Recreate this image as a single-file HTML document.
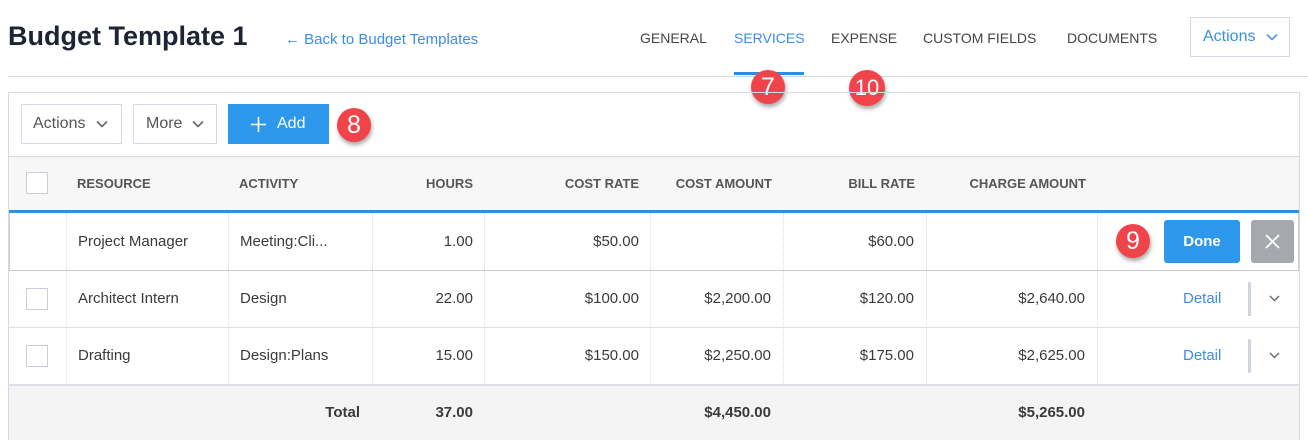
<!DOCTYPE html><html><head><style>
*{box-sizing:border-box;margin:0;padding:0}
body{width:1308px;height:444px;background:#fff;font-family:"Liberation Sans",sans-serif;position:relative;overflow:hidden;color:#333}
.a{position:absolute}
.badge{position:absolute;width:34px;height:34px;border-radius:50%;background:#f0434a;color:#fff;font-size:25px;text-align:center;line-height:34px;box-shadow:1px 3px 4px rgba(0,0,0,.35)}
.th{position:absolute;top:176px;font-size:13px;font-weight:bold;color:#555}
.c{position:absolute;font-size:15px;color:#3a3a3a;white-space:nowrap}
.r{text-align:right}
.vl{position:absolute;width:0;border-left:1px dotted #d8dce2}
.cb{position:absolute;width:22px;height:22px;border:1px solid #ccd;background:#fff}
.chev{position:absolute}
</style></head><body>
<div class="a" style="left:8px;top:21px;font-size:27px;font-weight:bold;color:#1d2433">Budget Template 1</div>
<div class="a" style="left:285px;top:31px;font-size:15px;color:#3a8ee6">← Back to Budget Templates</div>
<div class="a" style="left:640px;top:30px;font-size:14px;color:#444">GENERAL</div>
<div class="a" style="left:734px;top:30px;font-size:14px;color:#3a8ee6">SERVICES</div>
<div class="a" style="left:734px;top:72px;width:70px;height:3px;background:#2d8fe0"></div>
<div class="a" style="left:831px;top:30px;font-size:14px;color:#444">EXPENSE</div>
<div class="a" style="left:923px;top:30px;font-size:14px;color:#444">CUSTOM FIELDS</div>
<div class="a" style="left:1067px;top:30px;font-size:14px;color:#444">DOCUMENTS</div>
<div class="a" style="left:1190px;top:17px;width:100px;height:40px;border:1px solid #d4dae3;color:#3a8ee6;font-size:16px;padding:10px 0 0 12px">Actions</div>
<svg class="chev" style="left:1266px;top:33px" width="12" height="8"><path d="M1 1.5L6 6.5L11 1.5" fill="none" stroke="#3a8ee6" stroke-width="1.5"/></svg>
<div class="a" style="left:8px;top:76px;width:1300px;height:1px;background:#d4dae3"></div>
<div class="badge" style="left:751px;top:70px">7</div>
<div class="badge" style="left:849px;top:70px;width:36px;height:36px;line-height:36px;font-size:22px">10</div>
<div class="a" style="left:8px;top:92px;width:1292px;height:348px;border:1px solid #d4dae3"></div>
<div class="a" style="left:21px;top:104px;width:101px;height:40px;border:1px solid #d4dae3;font-size:16px;color:#555;padding:10px 0 0 11px;background:#fff">Actions</div>
<svg class="chev" style="left:96px;top:120px" width="12" height="8"><path d="M1 1.5L6 6.5L11 1.5" fill="none" stroke="#555" stroke-width="1.5"/></svg>
<div class="a" style="left:133px;top:104px;width:84px;height:40px;border:1px solid #d4dae3;font-size:16px;color:#555;padding:10px 0 0 12px">More</div>
<svg class="chev" style="left:192px;top:120px" width="12" height="8"><path d="M1 1.5L6 6.5L11 1.5" fill="none" stroke="#555" stroke-width="1.5"/></svg>
<div class="a" style="left:228px;top:104px;width:101px;height:40px;background:#2d97ec;color:#fff;font-size:16px;padding:11px 0 0 49px">Add</div>
<svg class="chev" style="left:250px;top:116px" width="17" height="17"><path d="M8.5 1V16M1 8.5H16" stroke="#fff" stroke-width="1.6"/></svg>
<div class="badge" style="left:337px;top:108px">8</div>
<div class="a" style="left:9px;top:156px;width:1290px;height:55px;background:#f7f7f7;border-top:1px solid #d4dae3"></div>
<div class="cb" style="left:26px;top:172px"></div>
<div class="th" style="left:77px">RESOURCE</div>
<div class="th" style="left:239px">ACTIVITY</div>
<div class="th r" style="left:372px;width:101px">HOURS</div>
<div class="th r" style="left:484px;width:155px">COST RATE</div>
<div class="th r" style="left:650px;width:122px">COST AMOUNT</div>
<div class="th r" style="left:783px;width:132px">BILL RATE</div>
<div class="th r" style="left:926px;width:160px">CHARGE AMOUNT</div>
<div class="a" style="left:9px;top:210px;width:1290px;height:3px;background:#2d8fe0"></div>
<div class="a" style="left:9px;top:213px;width:1290px;height:58px;border:1px solid #c8ccd2;border-top:none"></div>
<div class="a" style="left:9px;top:327px;width:1290px;height:1px;background:#dde1e7"></div>
<div class="a" style="left:9px;top:384px;width:1290px;height:56px;background:#f4f4f4;border-top:2px solid #dde1e7"></div>
<div class="vl" style="left:66px;top:213px;height:171px"></div>
<div class="vl" style="left:228px;top:213px;height:171px"></div>
<div class="vl" style="left:372px;top:213px;height:171px"></div>
<div class="vl" style="left:484px;top:213px;height:171px"></div>
<div class="vl" style="left:650px;top:213px;height:171px"></div>
<div class="vl" style="left:783px;top:213px;height:171px"></div>
<div class="vl" style="left:926px;top:213px;height:171px"></div>
<div class="vl" style="left:1097px;top:213px;height:171px"></div>
<div class="c" style="left:78px;top:233px">Project Manager</div>
<div class="c" style="left:240px;top:233px">Meeting:Cli...</div>
<div class="c r" style="left:372px;width:101px;top:233px">1.00</div>
<div class="c r" style="left:484px;width:155px;top:233px">$50.00</div>
<div class="c r" style="left:783px;width:131px;top:233px">$60.00</div>
<div class="badge" style="left:1116px;top:224px">9</div>
<div class="a" style="left:1164px;top:220px;width:76px;height:43px;background:#2d97ec;border-radius:3px;color:#fff;font-weight:bold;font-size:15px;text-align:center;line-height:43px">Done</div>
<div class="a" style="left:1251px;top:220px;width:43px;height:43px;background:#a5a8ac;border-radius:3px"></div>
<svg class="chev" style="left:1265px;top:234px" width="15" height="15"><path d="M1 1L14 14M14 1L1 14" stroke="#fff" stroke-width="1.8"/></svg>
<div class="cb" style="left:26px;top:288px"></div>
<div class="c" style="left:78px;top:290px">Architect Intern</div>
<div class="c" style="left:240px;top:290px">Design</div>
<div class="c r" style="left:372px;width:101px;top:290px">22.00</div>
<div class="c r" style="left:484px;width:155px;top:290px">$100.00</div>
<div class="c r" style="left:650px;width:121px;top:290px">$2,200.00</div>
<div class="c r" style="left:783px;width:131px;top:290px">$120.00</div>
<div class="c r" style="left:926px;width:159px;top:290px">$2,640.00</div>
<div class="c" style="left:1183px;top:290px;color:#3a8ee6">Detail</div>
<div class="a" style="left:1248px;top:282px;width:3px;height:34px;background:#cfd5dc"></div>
<svg class="chev" style="left:1269px;top:295px" width="11" height="7"><path d="M1 1L5.5 5.5L10 1" fill="none" stroke="#666" stroke-width="1.4"/></svg>
<div class="cb" style="left:26px;top:345px"></div>
<div class="c" style="left:78px;top:347px">Drafting</div>
<div class="c" style="left:240px;top:347px">Design:Plans</div>
<div class="c r" style="left:372px;width:101px;top:347px">15.00</div>
<div class="c r" style="left:484px;width:155px;top:347px">$150.00</div>
<div class="c r" style="left:650px;width:121px;top:347px">$2,250.00</div>
<div class="c r" style="left:783px;width:131px;top:347px">$175.00</div>
<div class="c r" style="left:926px;width:159px;top:347px">$2,625.00</div>
<div class="c" style="left:1183px;top:347px;color:#3a8ee6">Detail</div>
<div class="a" style="left:1248px;top:339px;width:3px;height:34px;background:#cfd5dc"></div>
<svg class="chev" style="left:1269px;top:352px" width="11" height="7"><path d="M1 1L5.5 5.5L10 1" fill="none" stroke="#666" stroke-width="1.4"/></svg>
<div class="c r" style="left:228px;width:132px;top:404px;font-weight:bold">Total</div>
<div class="c r" style="left:372px;width:101px;top:404px;font-weight:bold">37.00</div>
<div class="c r" style="left:650px;width:121px;top:404px;font-weight:bold">$4,450.00</div>
<div class="c r" style="left:926px;width:159px;top:404px;font-weight:bold">$5,265.00</div>
</body></html>
